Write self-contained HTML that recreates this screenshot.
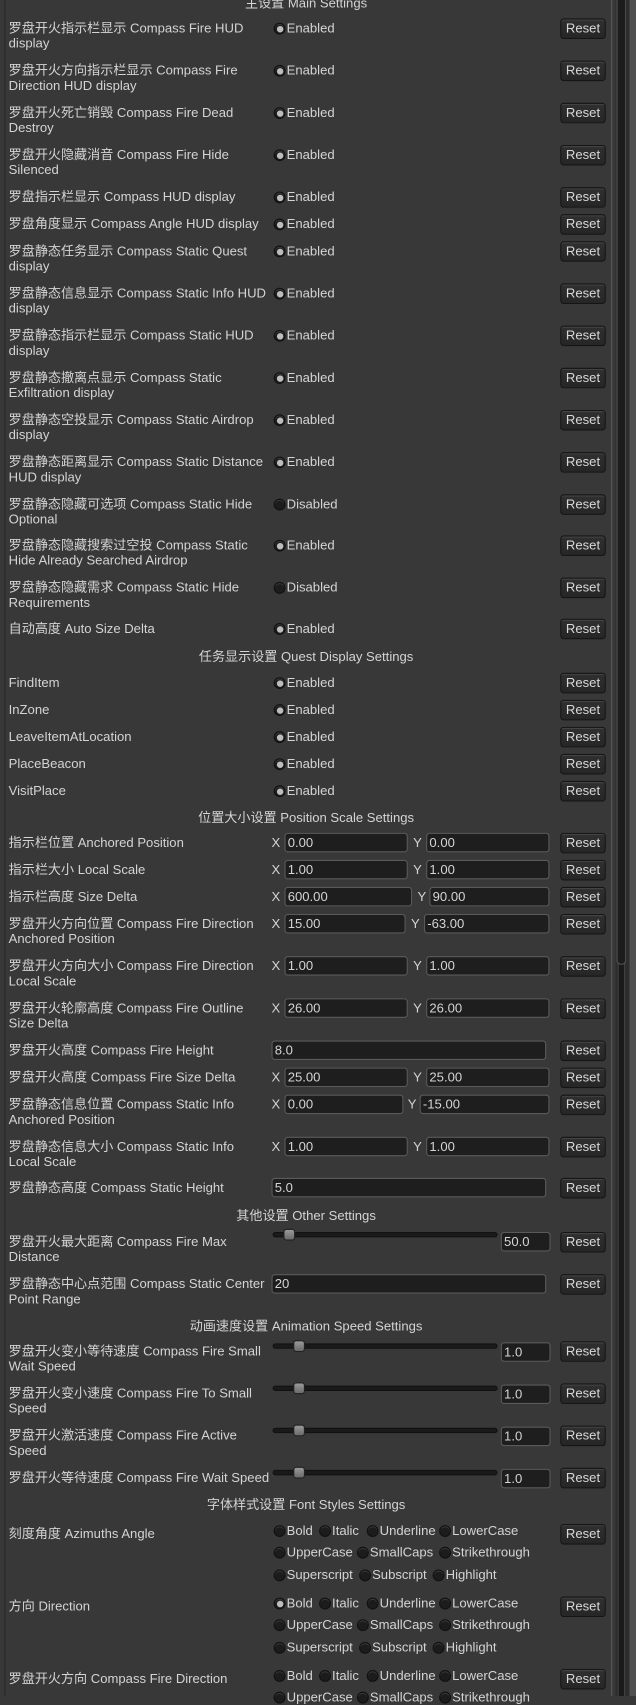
<!DOCTYPE html>
<html><head><meta charset="utf-8"><style>
*{margin:0;padding:0;box-sizing:border-box}
html,body{width:636px;height:1695px;overflow:hidden;background:#383838}
#s{position:absolute;left:0;top:0;width:588px;height:1568px;transform:scale(1.08163);transform-origin:0 0;background:#383838;font-family:"Liberation Sans","Noto Sans CJK SC",sans-serif;font-size:12.1px;color:#d4d4d4;line-height:14px}
.a{position:absolute;white-space:nowrap}
.lb{position:absolute;left:8px;width:241px;white-space:normal}
.h{position:absolute;left:0;width:566px;text-align:center}
.rb{position:absolute;left:518px;width:42px;height:19px;border:1px solid #151515;border-radius:3px;background:linear-gradient(#303030,#262626);text-align:center;line-height:17px;color:#d8d8d8;box-shadow:inset 0 1px 0 #444}
.tg{position:absolute;width:11px;height:11px;border-radius:50%;background:#1c1c1c;border:1px solid #111;box-shadow:inset 0 1px 0 #3a3a3a}
.tg.on::after{content:"";position:absolute;left:2px;top:1.5px;width:6px;height:6px;border-radius:50%;background:#bdbdbd}
.in{position:absolute;height:18px;background:#1e1e1e;border:1px solid #5a5a5a;border-radius:3px;padding-left:2px;line-height:16px;color:#d4d4d4}
.tr{position:absolute;height:5px;background:#1a1a1a;border-radius:3px;border:1px solid #111}
.kn{position:absolute;width:11px;height:11px;border-radius:3px;background:linear-gradient(#9a9a9a,#6a6a6a);border:1px solid #222}
</style></head><body><div id="s">
<div class="a" style="left:4px;top:0;width:1px;height:1568px;background:#262626"></div>
<div class="a" style="left:565px;top:0;width:1px;height:1568px;background:#5a5a5a"></div>
<div class="a" style="left:569px;top:0;width:19px;height:1568px;background:#2c2c2c"></div>
<div class="a" style="left:571px;top:0;width:7px;height:1568px;background:#1a1a1a;border-left:1px solid #444;border-right:1px solid #444"></div>
<div class="a" style="left:570px;top:0;width:9px;height:892px;border:1px solid #555;border-top:none;border-radius:0 0 4px 4px;background:#1c1c1c"></div>
<div class="a" style="left:582px;top:0;width:6px;height:1568px;background:#505050"></div>

<div class="h" style="top:-4px">主设置 Main Settings</div>

<div class="lb" style="top:19px">罗盘开火指示栏显示 Compass Fire HUD display</div>
<div class="lb" style="top:58px">罗盘开火方向指示栏显示 Compass Fire Direction HUD display</div>
<div class="lb" style="top:97px">罗盘开火死亡销毁 Compass Fire Dead Destroy</div>
<div class="lb" style="top:136px">罗盘开火隐藏消音 Compass Fire Hide Silenced</div>
<div class="lb" style="top:175px">罗盘指示栏显示 Compass HUD display</div>
<div class="lb" style="top:200px">罗盘角度显示 Compass Angle HUD display</div>
<div class="lb" style="top:225px">罗盘静态任务显示 Compass Static Quest display</div>
<div class="lb" style="top:264px">罗盘静态信息显示 Compass Static Info HUD<br>display</div>
<div class="lb" style="top:303px">罗盘静态指示栏显示 Compass Static HUD display</div>
<div class="lb" style="top:342px">罗盘静态撤离点显示 Compass Static Exfiltration display</div>
<div class="lb" style="top:381px">罗盘静态空投显示 Compass Static Airdrop display</div>
<div class="lb" style="top:420px">罗盘静态距离显示 Compass Static Distance HUD display</div>
<div class="lb" style="top:459px">罗盘静态隐藏可选项 Compass Static Hide Optional</div>
<div class="lb" style="top:497px">罗盘静态隐藏搜索过空投 Compass Static Hide Already Searched Airdrop</div>
<div class="lb" style="top:536px">罗盘静态隐藏需求 Compass Static Hide Requirements</div>
<div class="lb" style="top:574px">自动高度 Auto Size Delta</div>

<div class="tg on" style="left:253px;top:21px"></div><div class="a" style="left:265px;top:19px">Enabled</div><div class="rb" style="top:17px">Reset</div>
<div class="tg on" style="left:253px;top:60px"></div><div class="a" style="left:265px;top:58px">Enabled</div><div class="rb" style="top:56px">Reset</div>
<div class="tg on" style="left:253px;top:99px"></div><div class="a" style="left:265px;top:97px">Enabled</div><div class="rb" style="top:95px">Reset</div>
<div class="tg on" style="left:253px;top:138px"></div><div class="a" style="left:265px;top:136px">Enabled</div><div class="rb" style="top:134px">Reset</div>
<div class="tg on" style="left:253px;top:177px"></div><div class="a" style="left:265px;top:175px">Enabled</div><div class="rb" style="top:173px">Reset</div>
<div class="tg on" style="left:253px;top:202px"></div><div class="a" style="left:265px;top:200px">Enabled</div><div class="rb" style="top:198px">Reset</div>
<div class="tg on" style="left:253px;top:227px"></div><div class="a" style="left:265px;top:225px">Enabled</div><div class="rb" style="top:223px">Reset</div>
<div class="tg on" style="left:253px;top:266px"></div><div class="a" style="left:265px;top:264px">Enabled</div><div class="rb" style="top:262px">Reset</div>
<div class="tg on" style="left:253px;top:305px"></div><div class="a" style="left:265px;top:303px">Enabled</div><div class="rb" style="top:301px">Reset</div>
<div class="tg on" style="left:253px;top:344px"></div><div class="a" style="left:265px;top:342px">Enabled</div><div class="rb" style="top:340px">Reset</div>
<div class="tg on" style="left:253px;top:383px"></div><div class="a" style="left:265px;top:381px">Enabled</div><div class="rb" style="top:379px">Reset</div>
<div class="tg on" style="left:253px;top:422px"></div><div class="a" style="left:265px;top:420px">Enabled</div><div class="rb" style="top:418px">Reset</div>
<div class="tg" style="left:253px;top:461px"></div><div class="a" style="left:265px;top:459px">Disabled</div><div class="rb" style="top:457px">Reset</div>
<div class="tg on" style="left:253px;top:499px"></div><div class="a" style="left:265px;top:497px">Enabled</div><div class="rb" style="top:495px">Reset</div>
<div class="tg" style="left:253px;top:538px"></div><div class="a" style="left:265px;top:536px">Disabled</div><div class="rb" style="top:534px">Reset</div>
<div class="tg on" style="left:253px;top:576px"></div><div class="a" style="left:265px;top:574px">Enabled</div><div class="rb" style="top:572px">Reset</div>

<div class="h" style="top:600px">任务显示设置 Quest Display Settings</div>
<div class="lb" style="top:624px">FindItem</div><div class="tg on" style="left:253px;top:626px"></div><div class="a" style="left:265px;top:624px">Enabled</div><div class="rb" style="top:622px">Reset</div>
<div class="lb" style="top:649px">InZone</div><div class="tg on" style="left:253px;top:651px"></div><div class="a" style="left:265px;top:649px">Enabled</div><div class="rb" style="top:647px">Reset</div>
<div class="lb" style="top:674px">LeaveItemAtLocation</div><div class="tg on" style="left:253px;top:676px"></div><div class="a" style="left:265px;top:674px">Enabled</div><div class="rb" style="top:672px">Reset</div>
<div class="lb" style="top:699px">PlaceBeacon</div><div class="tg on" style="left:253px;top:701px"></div><div class="a" style="left:265px;top:699px">Enabled</div><div class="rb" style="top:697px">Reset</div>
<div class="lb" style="top:724px">VisitPlace</div><div class="tg on" style="left:253px;top:726px"></div><div class="a" style="left:265px;top:724px">Enabled</div><div class="rb" style="top:722px">Reset</div>

<div class="h" style="top:749px">位置大小设置 Position Scale Settings</div>
<div class="lb" style="top:772px">指示栏位置 Anchored Position</div>
<div class="a" style="left:251px;top:772px">X</div><div class="in" style="left:263px;top:770px;width:114px">0.00</div><div class="a" style="left:382px;top:772px">Y</div><div class="in" style="left:394px;top:770px;width:114px">0.00</div><div class="rb" style="top:770px">Reset</div>
<div class="lb" style="top:797px">指示栏大小 Local Scale</div>
<div class="a" style="left:251px;top:797px">X</div><div class="in" style="left:263px;top:795px;width:114px">1.00</div><div class="a" style="left:382px;top:797px">Y</div><div class="in" style="left:394px;top:795px;width:114px">1.00</div><div class="rb" style="top:795px">Reset</div>
<div class="lb" style="top:822px">指示栏高度 Size Delta</div>
<div class="a" style="left:251px;top:822px">X</div><div class="in" style="left:263px;top:820px;width:118px">600.00</div><div class="a" style="left:386px;top:822px">Y</div><div class="in" style="left:397px;top:820px;width:111px">90.00</div><div class="rb" style="top:820px">Reset</div>
<div class="lb" style="top:847px">罗盘开火方向位置 Compass Fire Direction<br>Anchored Position</div>
<div class="a" style="left:251px;top:847px">X</div><div class="in" style="left:263px;top:845px;width:112px">15.00</div><div class="a" style="left:380px;top:847px">Y</div><div class="in" style="left:392px;top:845px;width:116px">-63.00</div><div class="rb" style="top:845px">Reset</div>
<div class="lb" style="top:886px">罗盘开火方向大小 Compass Fire Direction<br>Local Scale</div>
<div class="a" style="left:251px;top:886px">X</div><div class="in" style="left:263px;top:884px;width:114px">1.00</div><div class="a" style="left:382px;top:886px">Y</div><div class="in" style="left:394px;top:884px;width:114px">1.00</div><div class="rb" style="top:884px">Reset</div>
<div class="lb" style="top:925px">罗盘开火轮廓高度 Compass Fire Outline<br>Size Delta</div>
<div class="a" style="left:251px;top:925px">X</div><div class="in" style="left:263px;top:923px;width:114px">26.00</div><div class="a" style="left:382px;top:925px">Y</div><div class="in" style="left:394px;top:923px;width:114px">26.00</div><div class="rb" style="top:923px">Reset</div>
<div class="lb" style="top:964px">罗盘开火高度 Compass Fire Height</div>
<div class="in" style="left:251px;top:962px;width:254px">8.0</div><div class="rb" style="top:962px">Reset</div>
<div class="lb" style="top:989px">罗盘开火高度 Compass Fire Size Delta</div>
<div class="a" style="left:251px;top:989px">X</div><div class="in" style="left:263px;top:987px;width:114px">25.00</div><div class="a" style="left:382px;top:989px">Y</div><div class="in" style="left:394px;top:987px;width:114px">25.00</div><div class="rb" style="top:987px">Reset</div>
<div class="lb" style="top:1014px">罗盘静态信息位置 Compass Static Info<br>Anchored Position</div>
<div class="a" style="left:251px;top:1014px">X</div><div class="in" style="left:263px;top:1012px;width:110px">0.00</div><div class="a" style="left:377px;top:1014px">Y</div><div class="in" style="left:388px;top:1012px;width:120px">-15.00</div><div class="rb" style="top:1012px">Reset</div>
<div class="lb" style="top:1053px">罗盘静态信息大小 Compass Static Info<br>Local Scale</div>
<div class="a" style="left:251px;top:1053px">X</div><div class="in" style="left:263px;top:1051px;width:114px">1.00</div><div class="a" style="left:382px;top:1053px">Y</div><div class="in" style="left:394px;top:1051px;width:114px">1.00</div><div class="rb" style="top:1051px">Reset</div>
<div class="lb" style="top:1091px">罗盘静态高度 Compass Static Height</div>
<div class="in" style="left:251px;top:1089px;width:254px">5.0</div><div class="rb" style="top:1089px">Reset</div>

<div class="h" style="top:1117px">其他设置 Other Settings</div>
<div class="lb" style="top:1141px">罗盘开火最大距离 Compass Fire Max<br>Distance</div>
<div class="tr" style="left:252px;top:1139px;width:208px"></div><div class="kn" style="left:262px;top:1136px"></div><div class="in" style="left:463px;top:1139px;width:46px">50.0</div><div class="rb" style="top:1139px">Reset</div>
<div class="lb" style="top:1180px">罗盘静态中心点范围 Compass Static Center<br>Point Range</div>
<div class="in" style="left:251px;top:1178px;width:254px">20</div><div class="rb" style="top:1178px">Reset</div>

<div class="h" style="top:1219px">动画速度设置 Animation Speed Settings</div>
<div class="lb" style="top:1242px">罗盘开火变小等待速度 Compass Fire Small<br>Wait Speed</div>
<div class="tr" style="left:252px;top:1242px;width:208px"></div><div class="kn" style="left:271px;top:1239px"></div><div class="in" style="left:463px;top:1241px;width:46px">1.0</div><div class="rb" style="top:1240px">Reset</div>
<div class="lb" style="top:1281px">罗盘开火变小速度 Compass Fire To Small<br>Speed</div>
<div class="tr" style="left:252px;top:1281px;width:208px"></div><div class="kn" style="left:271px;top:1278px"></div><div class="in" style="left:463px;top:1280px;width:46px">1.0</div><div class="rb" style="top:1279px">Reset</div>
<div class="lb" style="top:1320px">罗盘开火激活速度 Compass Fire Active<br>Speed</div>
<div class="tr" style="left:252px;top:1320px;width:208px"></div><div class="kn" style="left:271px;top:1317px"></div><div class="in" style="left:463px;top:1319px;width:46px">1.0</div><div class="rb" style="top:1318px">Reset</div>
<div class="a" style="left:8px;top:1359px">罗盘开火等待速度 Compass Fire Wait Speed</div>
<div class="tr" style="left:252px;top:1359px;width:208px"></div><div class="kn" style="left:271px;top:1356px"></div><div class="in" style="left:463px;top:1358px;width:46px">1.0</div><div class="rb" style="top:1357px">Reset</div>

<div class="h" style="top:1384px">字体样式设置 Font Styles Settings</div>

<div class="lb" style="top:1411px">刻度角度 Azimuths Angle</div><div class="rb" style="top:1409px">Reset</div>
<div class="tg" style="left:253px;top:1410px"></div><div class="a" style="left:265px;top:1408px">Bold</div>
<div class="tg" style="left:295px;top:1410px"></div><div class="a" style="left:307px;top:1408px">Italic</div>
<div class="tg" style="left:339px;top:1410px"></div><div class="a" style="left:351px;top:1408px">Underline</div>
<div class="tg" style="left:406px;top:1410px"></div><div class="a" style="left:418px;top:1408px">LowerCase</div>
<div class="tg" style="left:253px;top:1430px"></div><div class="a" style="left:265px;top:1428px">UpperCase</div>
<div class="tg" style="left:330px;top:1430px"></div><div class="a" style="left:342px;top:1428px">SmallCaps</div>
<div class="tg" style="left:406px;top:1430px"></div><div class="a" style="left:418px;top:1428px">Strikethrough</div>
<div class="tg" style="left:253px;top:1451px"></div><div class="a" style="left:265px;top:1449px">Superscript</div>
<div class="tg" style="left:332px;top:1451px"></div><div class="a" style="left:344px;top:1449px">Subscript</div>
<div class="tg" style="left:400px;top:1451px"></div><div class="a" style="left:412px;top:1449px">Highlight</div>

<div class="lb" style="top:1478px">方向 Direction</div><div class="rb" style="top:1476px">Reset</div>
<div class="tg on" style="left:253px;top:1477px"></div><div class="a" style="left:265px;top:1475px">Bold</div>
<div class="tg" style="left:295px;top:1477px"></div><div class="a" style="left:307px;top:1475px">Italic</div>
<div class="tg" style="left:339px;top:1477px"></div><div class="a" style="left:351px;top:1475px">Underline</div>
<div class="tg" style="left:406px;top:1477px"></div><div class="a" style="left:418px;top:1475px">LowerCase</div>
<div class="tg" style="left:253px;top:1497px"></div><div class="a" style="left:265px;top:1495px">UpperCase</div>
<div class="tg" style="left:330px;top:1497px"></div><div class="a" style="left:342px;top:1495px">SmallCaps</div>
<div class="tg" style="left:406px;top:1497px"></div><div class="a" style="left:418px;top:1495px">Strikethrough</div>
<div class="tg" style="left:253px;top:1518px"></div><div class="a" style="left:265px;top:1516px">Superscript</div>
<div class="tg" style="left:332px;top:1518px"></div><div class="a" style="left:344px;top:1516px">Subscript</div>
<div class="tg" style="left:400px;top:1518px"></div><div class="a" style="left:412px;top:1516px">Highlight</div>

<div class="lb" style="top:1545px">罗盘开火方向 Compass Fire Direction</div><div class="rb" style="top:1543px">Reset</div>
<div class="tg" style="left:253px;top:1544px"></div><div class="a" style="left:265px;top:1542px">Bold</div>
<div class="tg" style="left:295px;top:1544px"></div><div class="a" style="left:307px;top:1542px">Italic</div>
<div class="tg" style="left:339px;top:1544px"></div><div class="a" style="left:351px;top:1542px">Underline</div>
<div class="tg" style="left:406px;top:1544px"></div><div class="a" style="left:418px;top:1542px">LowerCase</div>
<div class="tg" style="left:253px;top:1564px"></div><div class="a" style="left:265px;top:1562px">UpperCase</div>
<div class="tg" style="left:330px;top:1564px"></div><div class="a" style="left:342px;top:1562px">SmallCaps</div>
<div class="tg" style="left:406px;top:1564px"></div><div class="a" style="left:418px;top:1562px">Strikethrough</div>
</div></body></html>
